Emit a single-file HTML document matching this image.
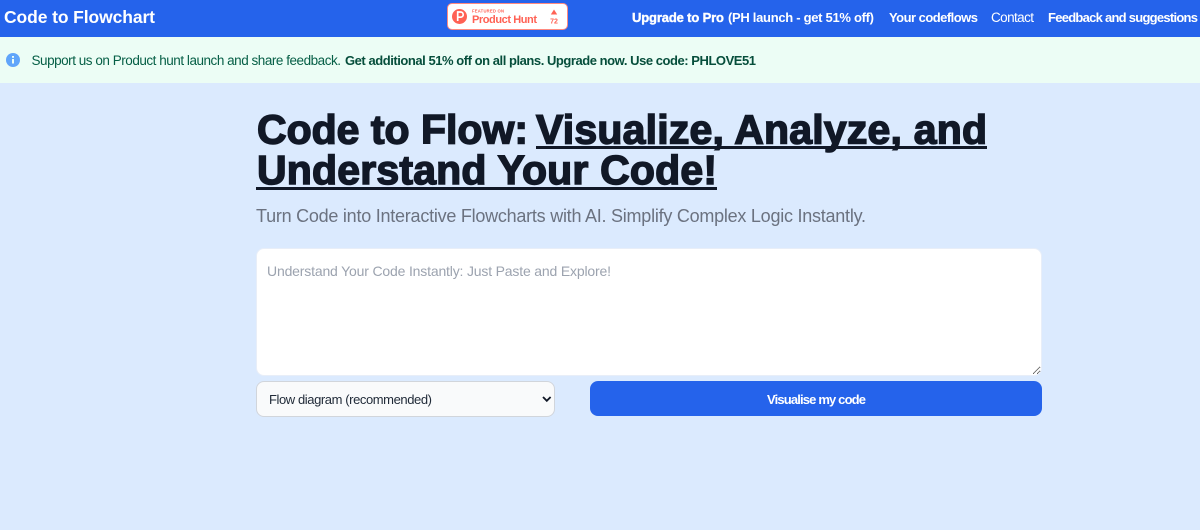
<!DOCTYPE html>
<html lang="en">
<head>
<meta charset="utf-8">
<title>Code to Flowchart</title>
<style>
html,body{margin:0;padding:0;width:1200px;height:530px;overflow:hidden;background:#dbeafe;font-family:"Liberation Sans",sans-serif}
*{box-sizing:border-box}
.nav{position:absolute;left:0;top:0;width:1200px;height:37px;background:#2563eb}
.banner{position:absolute;left:0;top:37px;width:1200px;height:46px;background:#ecfdf5}
.badge{position:absolute;left:447px;top:3px;width:121px;height:27px;background:#fff;border:1px solid #ff8a80;border-radius:5px}
textarea{position:absolute;left:256px;top:248px;width:786px;height:128px;background:#fff;border:1px solid #e8eef8;border-radius:8px;padding:10px;margin:0;outline:none;font:14px "Liberation Sans",sans-serif;resize:vertical}
select{position:absolute;left:256px;top:381px;width:299px;height:35.5px;background:#f9fafb;border:1px solid #d1d5db;border-radius:8px;padding:0 12px;margin:0;color:transparent;font:13px "Liberation Sans",sans-serif;appearance:none;-webkit-appearance:none;outline:none}
button{position:absolute;left:590px;top:381px;width:452px;height:35px;background:#2563eb;color:#fff;border:0;border-radius:8px;margin:0;padding:0;font:bold 13px "Liberation Sans",sans-serif}
svg.ov{position:absolute;left:0;top:0;width:1200px;height:530px;pointer-events:none}
svg text{font-family:"Liberation Sans",sans-serif;white-space:pre}
</style>
</head>
<body>
<div class="nav"></div>
<div class="banner"></div>
<div class="badge"></div>
<textarea aria-label="Code"></textarea>
<select aria-label="Diagram type"><option>Flow diagram (recommended)</option></select>
<button></button>
<svg class="ov" viewBox="0 0 1200 530" xmlns="http://www.w3.org/2000/svg">
  <!-- nav -->
  <text x="4" y="23" font-size="17.5" font-weight="700" fill="#fff" textLength="151" lengthAdjust="spacing">Code to Flowchart</text>
  <text x="632" y="22" font-size="13" font-weight="700" fill="#fff" stroke="#fff" stroke-width=".4" textLength="92" lengthAdjust="spacing">Upgrade to Pro</text>
  <text x="728" y="22" font-size="13" font-weight="700" fill="#fff" textLength="146" lengthAdjust="spacing">(PH launch - get 51% off)</text>
  <text x="889" y="22" font-size="13" font-weight="700" fill="#fff" textLength="89" lengthAdjust="spacing">Your codeflows</text>
  <text x="991" y="22" font-size="13.5" fill="#fff" textLength="43" lengthAdjust="spacing">Contact</text>
  <text x="1048" y="22" font-size="13" font-weight="700" fill="#fff" textLength="150" lengthAdjust="spacing">Feedback and suggestions</text>
  <!-- badge -->
  <circle cx="459.5" cy="16.5" r="7.5" fill="#ff6154"/>
  <path d="M457.7 21v-9h2.9a2.6 2.6 0 0 1 0 5.2h-2.9" fill="none" stroke="#fff" stroke-width="1.7"/>
  <text x="472" y="12.5" font-size="4.2" font-weight="700" fill="#ff6154" textLength="32" lengthAdjust="spacing">FEATURED ON</text>
  <text x="472" y="23" font-size="11" font-weight="700" fill="#ff6154" textLength="65" lengthAdjust="spacing">Product Hunt</text>
  <path d="M554 9.5l3.2 5h-6.4z" fill="#ff6154"/>
  <text x="554" y="23.5" font-size="7" font-weight="700" text-anchor="middle" fill="#ff6154">72</text>
  <!-- banner -->
  <circle cx="13" cy="60" r="7" fill="#60a5fa"/>
  <rect x="12" y="59" width="2" height="4.5" fill="#ecfdf5"/>
  <rect x="12" y="56" width="2" height="1.8" fill="#ecfdf5"/>
  <text x="31.5" y="65" font-size="13.5" fill="#065f46" textLength="309.5" lengthAdjust="spacing">Support us on Product hunt launch and share feedback.</text>
  <text x="345" y="65" font-size="13" font-weight="700" fill="#064e3b" textLength="411" lengthAdjust="spacing">Get additional 51% off on all plans. Upgrade now. Use code: PHLOVE51</text>
  <!-- heading -->
  <g fill="#111827" stroke="#111827" stroke-width="1.5" font-size="41" font-weight="700">
    <text x="257" y="143.5" textLength="271" lengthAdjust="spacing">Code to Flow:</text>
    <text x="536" y="143.5" textLength="451" lengthAdjust="spacing">Visualize, Analyze, and</text>
    <text x="257" y="184" textLength="460" lengthAdjust="spacing">Understand Your Code!</text>
  </g>
  <rect x="536" y="146" width="451" height="3" fill="#111827"/>
  <rect x="256" y="187" width="461" height="3" fill="#111827"/>
  <text x="256" y="222" font-size="18" fill="#6b7280" textLength="610" lengthAdjust="spacing">Turn Code into Interactive Flowcharts with AI. Simplify Complex Logic Instantly.</text>
  <!-- form -->
  <text x="267" y="276" font-size="14" fill="#9ca3af" textLength="344" lengthAdjust="spacing">Understand Your Code Instantly: Just Paste and Explore!</text>
  <text x="269" y="404" font-size="13" fill="#1f2937" textLength="163" lengthAdjust="spacing">Flow diagram (recommended)</text>
  <path d="M543 397l3.8 3.8 3.8-3.8" fill="none" stroke="#111827" stroke-width="1.8"/>
  <text x="767" y="404" font-size="13" font-weight="700" fill="#fff" textLength="99" lengthAdjust="spacing">Visualise my code</text>
</svg>
</body>
</html>
